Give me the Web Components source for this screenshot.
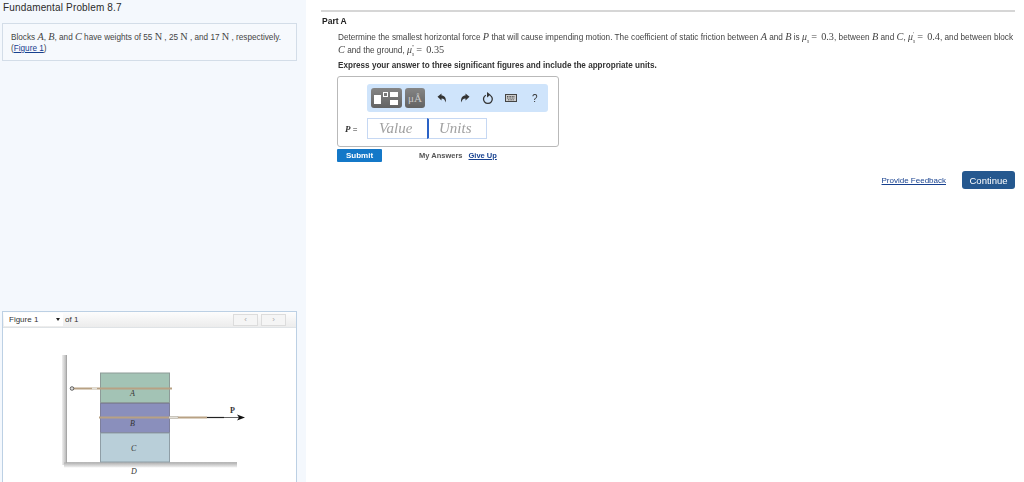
<!DOCTYPE html>
<html><head><meta charset="utf-8">
<style>
html,body{margin:0;padding:0;background:#fff;font-family:"Liberation Sans",Arial,sans-serif;}
</style></head><body>
<mp-page>
  <mp-left slot="left">
    <mp-problem></mp-problem>
    <mp-figure></mp-figure>
  </mp-left>
  <mp-right slot="right">
    <mp-part></mp-part>
  </mp-right>
</mp-page>
<script>
const M=(t)=>`<i style="font-family:'Liberation Serif',serif;font-size:1.25em">${t}</i>`;
const U=(t)=>`<span style="font-family:'Liberation Serif',serif;font-size:1.25em">${t}</span>`;
const E=(t)=>`<span style="font-family:'Liberation Serif',serif;font-size:1.25em;word-spacing:1.5px">${t}</span>`;
const mu=(s,p)=>`<i style="font-family:'Liberation Serif',serif;font-size:1.2em">μ</i>${p?`<sup style="font-size:.6em;line-height:0;display:inline-block;width:0">${p}</sup>`:''}<sub style="font-size:.65em;line-height:0;font-family:'Liberation Serif',serif"><i>${s}</i></sub>`;
function def(name,html){customElements.define(name,class extends HTMLElement{constructor(){super();this.attachShadow({mode:'open'}).innerHTML=html;}});}

def('mp-page',`<style>:host{display:grid;grid-template-columns:306px 1fr;width:1024px;height:482px;overflow:hidden;filter:blur(.4px)}</style><slot name="left"></slot><slot name="right"></slot>`);

def('mp-left',`<style>:host{display:flex;flex-direction:column;background:#f4f8fd;height:482px;overflow:hidden;padding:0 9px 0 2px;box-sizing:border-box}</style><slot></slot>`);

def('mp-problem',`<style>
:host{display:block;height:311px;box-sizing:border-box;color:#333}
h1{font:400 10px/12px "Liberation Sans",sans-serif;margin:0;padding:2px 0 0 1px;color:#2b2b2b;letter-spacing:.16px;height:23px;box-sizing:border-box}
.box{border:1px solid #d3dde8;background:#f6f9fd;height:38px;box-sizing:border-box;padding:7px 8px;font-size:8.2px;line-height:11px;color:#444;white-space:nowrap}
a{color:#16408f;text-decoration:underline}
</style><h1>Fundamental Problem 8.7</h1>
<div class="box">Blocks ${M('A')}, ${M('B')}, and ${M('C')} have weights of 55 ${U('N')} , 25 ${U('N')} , and 17 ${U('N')} , respectively.<br>(<a>Figure 1</a>)</div>`);

def('mp-figure',`<style>
:host{display:block;border:1px solid #bcd0e4;border-bottom:0;background:#fff;height:171px;box-sizing:border-box;overflow:hidden}
.bar{height:16px;box-sizing:border-box;background:linear-gradient(#fdfdfd,#ececec);border-bottom:1px solid #dfe3e6;display:flex;align-items:center;font-size:8px;color:#333}
.sel{width:59px;height:13px;margin-left:1px;background:#fff;display:flex;align-items:center;justify-content:space-between;padding:0 3px 0 5px;box-sizing:border-box}
.ar{width:0;height:0;border:2.5px solid transparent;border-top:3px solid #222;border-bottom:0}
.of{margin-left:2px;flex:1}
.nav{width:25px;height:12px;border:1px solid #dcdcdc;background:#f5f5f5;display:flex;align-items:center;justify-content:center;color:#aaa;font-size:8px;box-sizing:border-box;margin-right:3px}
.nav+.nav{margin-right:10px}
.d{padding:17px 0 0 47px}
svg{display:block}
text{font-family:"Liberation Serif",serif;font-size:8px;fill:#333}
</style>
<div class="bar"><div class="sel"><span>Figure 1</span><span class="ar"></span></div><span class="of">of 1</span><div class="nav">‹</div><div class="nav">›</div></div>
<div class="d"><svg width="210" height="137" viewBox="0 0 210 137">
<defs><linearGradient id="w" x1="0" x2="1"><stop offset="0" stop-color="#efefef"/><stop offset="1" stop-color="#aeaeae"/></linearGradient>
<linearGradient id="f" x1="0" y1="0" x2="0" y2="1"><stop offset="0" stop-color="#aeaeae"/><stop offset="1" stop-color="#f2f2f2"/></linearGradient></defs>
<rect x="12" y="10" width="5" height="110" fill="url(#w)"/>
<rect x="14" y="117.500" width="173" height="5" fill="url(#f)"/>
<path d="M16.500 10V117.500H187" fill="none" stroke="#999" stroke-width=".5"/>
<rect x="50.500" y="28" width="69" height="29.500" fill="#a3c3b5" stroke="#8d9b98"/>
<rect x="50.500" y="58.500" width="69" height="29" fill="#8a8fbc" stroke="#7d7f9c"/>
<rect x="50.500" y="88" width="69" height="29" fill="#b9cfd9" stroke="#8f9ea6"/>
<line x1="22" y1="43.500" x2="122" y2="43.500" stroke="#b8a184" stroke-width="2.200"/>
<rect x="42" y="42.500" width="5" height="2" fill="#e4e0d8"/>
<circle cx="22" cy="43.500" r="1.800" fill="#ddd" stroke="#444" stroke-width=".8"/>
<line x1="49" y1="72.500" x2="157" y2="72.500" stroke="#b8a184" stroke-width="2.200"/>
<rect x="119" y="71.500" width="9" height="2" fill="#e4e0d8" stroke="#999" stroke-width=".3"/>
<line x1="157" y1="72.500" x2="174" y2="72.500" stroke="#222" stroke-width="1.200"/>
<line x1="174" y1="72.500" x2="190" y2="72.500" stroke="#222" stroke-width=".7"/>
<path d="M195 72.500L187 69.500L189 72.500L187 75.500Z" fill="#111"/>
<text x="180" y="68" style="font-weight:700">P</text>
<text x="80" y="51" font-style="italic">A</text>
<text x="80" y="81" font-style="italic">B</text>
<text x="81" y="106" font-style="italic">C</text>
<text x="81" y="129" font-style="italic">D</text>
</svg></div>`);

def('mp-right',`<style>:host{display:block;padding:10px 9px 0 15px;height:482px;box-sizing:border-box}</style><slot></slot>`);

def('mp-part',`<style>
:host{display:block;border-top:2px solid #d6d6d6;color:#333}
h2{font:700 8.500px/10px "Liberation Sans",sans-serif;margin:0;padding:4px 0 0 1px;height:19px;box-sizing:border-box;color:#222}
.body{padding-left:17px;font-size:8.220px;line-height:12px;white-space:nowrap;color:#444;height:24px}
.ins{padding-left:17px;font-size:8.150px;font-weight:700;line-height:12px;height:16px;padding-top:5px;box-sizing:content-box;color:#333}
.sub{display:flex;padding:2px 0 0 16px;height:13px;align-items:center}
.btn{width:45px;height:13px;background:#1478c8;color:#fff;font-size:8px;font-weight:700;display:flex;align-items:center;justify-content:center;border-radius:1px}
.my{margin-left:37px;font-size:7.500px;font-weight:700;color:#555}
.gu{margin-left:6px;font-size:7.500px;font-weight:700;color:#16408f;text-decoration:underline}
.foot{display:flex;justify-content:flex-end;align-items:center;padding-top:9px}
.fb{font-size:8px;color:#16408f;text-decoration:underline;margin-right:16px}
.cont{width:53px;height:18px;background:#25588f;color:#fff;font-size:9.500px;border-radius:3px;display:flex;align-items:center;justify-content:center}
</style>
<h2>Part A</h2>
<div class="body">Determine the smallest horizontal force ${M('P')} that will cause impending motion. The coefficient of static friction between ${M('A')} and ${M('B')} is ${mu('s')} ${E('= 0.3')}, between ${M('B')} and ${M('C')}, ${mu('s','′')} ${E('= 0.4')}, and between block<br>${M('C')} and the ground, ${mu('s','″')} ${E('= 0.35')}</div>
<div class="ins">Express your answer to three significant figures and include the appropriate units.</div>
<mp-answer></mp-answer>
<div class="sub"><div class="btn">Submit</div><span class="my">My Answers</span><span class="gu">Give Up</span></div>
<div class="foot"><span class="fb">Provide Feedback</span><div class="cont">Continue</div></div>`);

def('mp-answer',`<style>
:host{display:block;margin-left:16px;width:222px;height:71px;box-sizing:border-box;border:1px solid #b9b9b9;border-radius:3px;padding:7px 10px 0 29px;background:#fff}
.row{display:flex;align-items:center;margin-top:6px;margin-left:-29px;height:21px}
.p{width:29px;box-sizing:border-box;padding-left:7px;font:9px "Liberation Serif",serif;color:#333;white-space:nowrap}
.p i{font-weight:700}
.p span{font:8px "Liberation Sans",sans-serif}
.f{height:21px;box-sizing:border-box;border:1px solid #c6d8f3;display:flex;align-items:center;font:italic 15px "Liberation Serif",serif;color:#a0a0a0;background:#fff}
.v{width:60px;padding-left:11px;border-right:0}
.u{width:60px;padding-left:10px;border-left:2px solid #2a62c6}
</style>
<mp-tools></mp-tools>
<div class="row"><span class="p"><i>P</i> <span>=</span></span><div class="f v">Value</div><div class="f u">Units</div></div>`);

def('mp-tools',`<style>
:host{display:flex;align-items:center;width:181px;height:28px;background:#cfe4fb;border-radius:3px;box-sizing:border-box;padding-left:4px}
.b{height:20px;background:linear-gradient(#858585,#626262);border-radius:3px;display:flex;align-items:center;justify-content:center}
.t{width:31px}
.m{width:20px;margin-left:3px;font:11px "Liberation Serif",serif;color:#c9c9c9;white-space:nowrap}
.q{font-size:10px;color:#333}
svg{display:block}
</style>
<div class="b t"><svg width="27" height="14" viewBox="0 0 27 14"><rect x="1" y="4" width="7" height="9" fill="#fff"/><rect x="10.500" y="1.500" width="4" height="4" fill="none" stroke="#fff"/><rect x="17" y="1" width="8" height="5" fill="#fff"/><rect x="17" y="9" width="8" height="5" fill="#fff"/></svg></div>
<div class="b m">μÅ</div>
<svg style="margin-left:12px" width="10" height="10" viewBox="0 0 10 10"><path d="M0.500 3.800L4.500 0.500V2.600C7.500 2.600 9.500 5 8.800 9.500C8 7 7 5.400 4.500 5.400V7.500Z" fill="#333"/></svg>
<svg style="margin-left:13px" width="10" height="10" viewBox="0 0 10 10"><path d="M9.500 3.800L5.500 0.500V2.600C2.500 2.600 .5 5 1.200 9.500C2 7 3 5.400 5.500 5.400V7.500Z" fill="#333"/></svg>
<svg style="margin-left:12px" width="12" height="13" viewBox="0 0 12 13"><path d="M3.800 3.200A4.400 4.400 0 1 0 8 3.200" fill="none" stroke="#333" stroke-width="1.300"/><path d="M5 0V5.400L8.600 2.700Z" fill="#333"/></svg>
<svg style="margin-left:11px" width="12" height="8" viewBox="0 0 12 8"><rect x=".5" y=".5" width="11" height="7" fill="#ccc" stroke="#444"/><path d="M2 2.500H10M2 4H10M3 5.800H9" stroke="#444" stroke-width=".9" stroke-dasharray="1 .6"/></svg>
<span class="q" style="margin-left:15px">?</span>`);
</script>
</body></html>
